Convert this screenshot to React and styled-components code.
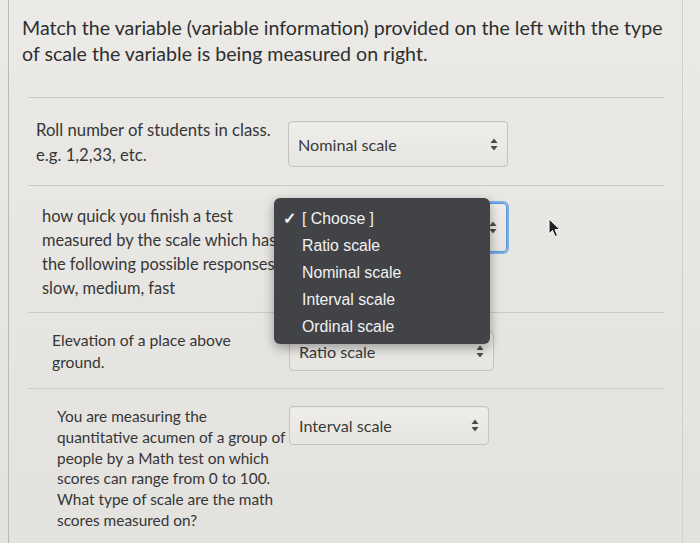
import React from "react";
import styled, { createGlobalStyle } from "styled-components";

const GlobalStyle = createGlobalStyle`
  html, body {
    margin: 0;
    padding: 0;
    background: #e7e6e2;
  }
  body {
    font-family: Lato, "Open Sans", sans-serif;
    color: #333;
  }
`;

const Page = styled.div`
  position: relative;
  width: 700px;
  height: 543px;
  overflow: hidden;
  background: linear-gradient(180deg, #ebeae7 0%, #e6e5e1 60%, #e3e2de 100%);
`;

const Panel = styled.div`
  margin-left: 8px;
  width: 675px;
  height: 543px;
  box-sizing: border-box;
  border-left: 1px solid #b9b9b6;
  border-right: 1px solid #cfcfcc;
  padding-top: 15px;
`;

const Title = styled.h2`
  margin: 0 0 30px 13px;
  font-size: 19.6px;
  font-weight: 400;
  line-height: 26px;
  color: #2f2f2f;
  white-space: nowrap;
`;

const List = styled.div`
  margin: 0 18px 0 19px;
`;

const Row = styled.div`
  display: flex;
  align-items: flex-start;
  border-top: 1px solid #cbcac6;
  padding: ${(p) => p.$pad[0]}px 0 ${(p) => p.$pad[1]}px ${(p) => p.$indent - 28}px;
`;

const Prompt = styled.div`
  flex: 0 0 ${(p) => p.$width}px;
  overflow: hidden;
  font-size: ${(p) => p.$size}px;
  line-height: ${(p) => p.$lh}px;
  color: #363636;
  white-space: nowrap;
`;

const SelectWrap = styled.div`
  position: relative;
  margin-top: ${(p) => p.$top}px;
  margin-left: ${(p) => p.$gap}px;
`;

const SelectBox = styled.div`
  box-sizing: border-box;
  width: ${(p) => p.$w}px;
  height: ${(p) => p.$h}px;
  display: flex;
  align-items: center;
  justify-content: space-between;
  padding: 0 9px 0 9px;
  border: 1px solid ${(p) => (p.$focus ? "#5b95d6" : "#c3c3c0")};
  box-shadow: ${(p) =>
    p.$focus ? "0 0 0 2px #7aaee6" : "inset 0 1px 1px rgba(0,0,0,0.05)"};
  border-radius: 4px;
  background: linear-gradient(180deg, #efeeeb 0%, #e6e5e2 100%);
  font-size: 16.2px;
  color: #3a3a3a;
`;

const Value = styled.span`
  visibility: ${(p) => (p.$hidden ? "hidden" : "visible")};
`;

const Menu = styled.ul`
  position: absolute;
  left: -11px;
  top: -5px;
  width: 216px;
  height: 146px;
  box-sizing: border-box;
  margin: 0;
  padding: 7px 0;
  list-style: none;
  background: #414347;
  border-radius: 6px;
  box-shadow: 0 4px 12px rgba(0, 0, 0, 0.35);
  z-index: 2;
  font-family: "Liberation Sans", Arial, sans-serif;
`;

const MenuItem = styled.li`
  display: flex;
  align-items: center;
  height: 27px;
  padding-left: 9px;
  color: #f2f2f2;
  font-size: 15.8px;
`;

const Check = styled.span`
  width: 19px;
  font-weight: 700;
  font-size: 16px;
`;

const Cursor = styled.svg`
  position: absolute;
  left: 548px;
  top: 218px;
  z-index: 3;
`;

function Arrows() {
  return (
    <svg width="8" height="13" viewBox="0 0 8 13">
      <path d="M4 0.5 L7.5 5 L0.5 5 Z" fill="#4a4a4a" />
      <path d="M4 12.5 L7.5 8 L0.5 8 Z" fill="#4a4a4a" />
    </svg>
  );
}

const questions = [
  {
    lines: ["Roll number of students in class.", "e.g. 1,2,33, etc."],
    value: "Nominal scale",
    indent: 36,
    width: 252,
    gap: 0,
    size: 16.7,
    lh: 25,
    pad: [20, 17],
    select: { w: 220, h: 46, top: 3 },
  },
  {
    lines: [
      "how quick you finish a test",
      "measured by the scale which has",
      "the following possible responses",
      "slow, medium, fast",
    ],
    value: "[ Choose ]",
    indent: 42,
    width: 232,
    gap: 11,
    size: 16.4,
    lh: 24,
    pad: [18, 12],
    select: { w: 222, h: 49, top: -1 },
    open: true,
  },
  {
    lines: ["Elevation of a place above", "ground."],
    value: "Ratio scale",
    indent: 52,
    width: 237,
    gap: 0,
    size: 15.7,
    lh: 22,
    pad: [16, 15],
    select: { w: 205, h: 40, top: 2 },
  },
  {
    lines: [
      "You are measuring the",
      "quantitative acumen of a group of",
      "people by a Math test on which",
      "scores can range from 0 to 100.",
      "What type of scale are the math",
      "scores measured on?",
    ],
    value: "Interval scale",
    indent: 57,
    width: 232,
    gap: 0,
    size: 15.4,
    lh: 20.8,
    pad: [17, 10],
    select: { w: 200, h: 39, top: 0 },
  },
];

const options = ["[ Choose ]", "Ratio scale", "Nominal scale", "Interval scale", "Ordinal scale"];

export default function App() {
  return (
    <>
      <GlobalStyle />
      <Page>
        <Panel>
          <Title>
            Match the variable (variable information) provided on the left with the type
            <br />
            of scale the variable is being measured on right.
          </Title>
          <List>
            {questions.map((q, i) => (
              <Row key={i} $indent={q.indent} $pad={q.pad}>
                <Prompt $width={q.width} $size={q.size} $lh={q.lh}>
                  {q.lines.map((l, j) => (
                    <div key={j}>{l}</div>
                  ))}
                </Prompt>
                <SelectWrap $top={q.select.top} $gap={q.gap}>
                  <SelectBox $w={q.select.w} $h={q.select.h} $focus={q.open}>
                    <Value $hidden={q.open}>{q.value}</Value>
                    <Arrows />
                  </SelectBox>
                  {q.open && (
                    <Menu>
                      {options.map((o, k) => (
                        <MenuItem key={o}>
                          <Check>{k === 0 ? "✓" : ""}</Check>
                          {o}
                        </MenuItem>
                      ))}
                    </Menu>
                  )}
                </SelectWrap>
              </Row>
            ))}
          </List>
        </Panel>
        <Cursor width="14" height="20" viewBox="0 0 14 20">
          <path
            d="M1 1 L1 16 L4.5 12.5 L7 18.5 L9.5 17.5 L7 11.5 L12 11.5 Z"
            fill="#222"
            stroke="#fff"
            strokeWidth="1"
          />
        </Cursor>
      </Page>
    </>
  );
}
